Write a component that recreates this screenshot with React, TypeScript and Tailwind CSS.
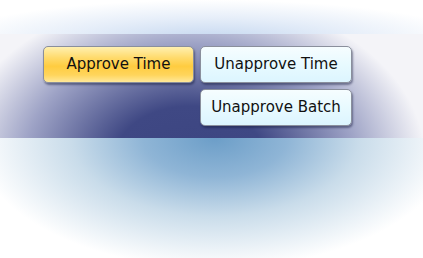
export default function App() {
  const font = { fontFamily: '"DejaVu Sans", Verdana, sans-serif' };
  const btn =
    "h-[37px] rounded-[5px] border border-[#8a8f9c] text-[15px] text-[#111] flex items-center justify-center shadow-[1px_2px_2px_rgba(20,25,60,0.45)]";

  return (
    <div className="w-[423px] h-[258px] flex flex-col bg-white overflow-hidden" style={font}>
      <div className="h-[34px] bg-[radial-gradient(ellipse_260px_40px_at_210px_40px,#c3d6ef_0%,#e6eef9_55%,#ffffff_100%)]" />
      <div className="h-[104px] pl-[43px] pt-[12px] bg-[radial-gradient(ellipse_235px_165px_at_190px_125px,#3c4581_0%,#3f4884_32%,#9ea3c6_70%,#f4f4f8_100%)]">
        <div className="grid grid-cols-[151px_152px] gap-x-[6px] gap-y-[6px]">
          <button className={`${btn} bg-[linear-gradient(#fff0b0_0%,#ffdb6e_30%,#ffcc40_55%,#ffd55c_80%,#ffe89a_100%)]`}>
            Approve Time
          </button>
          <button className={`${btn} bg-[linear-gradient(#f6fdff_0%,#e8faff_50%,#dcf5ff_100%)]`}>
            Unapprove Time
          </button>
          <div />
          <button className={`${btn} bg-[linear-gradient(#f6fdff_0%,#e8faff_50%,#dcf5ff_100%)]`}>
            Unapprove Batch
          </button>
        </div>
      </div>
      <div className="flex-1 bg-[radial-gradient(ellipse_240px_130px_at_215px_0px,#6c9ec8_0%,#8fb5d6_30%,#c9dcea_60%,#ffffff_100%)]" />
    </div>
  );
}
